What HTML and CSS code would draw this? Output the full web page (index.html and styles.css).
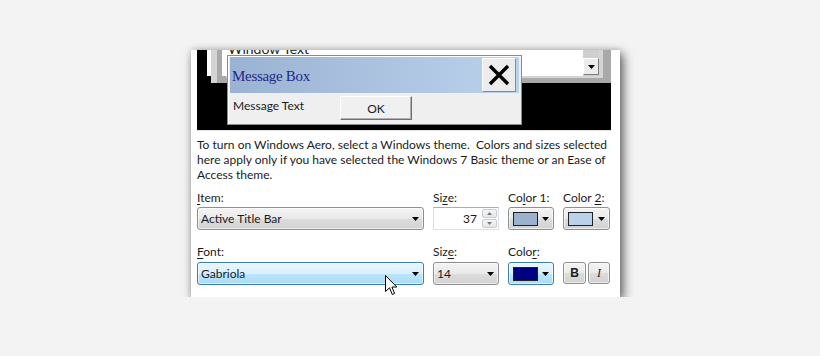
FILE: index.html
```html
<!DOCTYPE html>
<html>
<head>
<meta charset="utf-8">
<link rel="stylesheet" href="styles.css">
</head>
<body>
<div class="panel">
  <div class="preview">
    <div class="aw-back"></div>
    <div class="aw">
      <div class="client">
        <span class="wtext">Window Text</span>
        <div class="vscroll">
          <div class="sbtn"><svg width="7" height="4" viewBox="0 0 7 4"><path d="M0 0h7L3.5 4z" fill="#000"/></svg></div>
        </div>
      </div>
    </div>
    <div class="msgbox">
      <div class="mtitle">
        <span class="mtitle-text">Message Box</span>
        <div class="mclose"><svg width="22" height="22" viewBox="0 0 22 22"><path d="M2 2L20 20M20 2L2 20" stroke="#000" stroke-width="3.4"/></svg></div>
      </div>
      <div class="mbody">
        <span class="mtext">Message Text</span>
        <div class="okbtn">OK</div>
      </div>
    </div>
  </div>

  <p class="desc">To turn on Windows Aero, select a Windows theme.&nbsp; Colors and sizes selected<br>here apply only if you have selected the Windows 7 Basic theme or an Ease of<br>Access theme.</p>

  <div class="grid">
    <div class="lbl"><u>I</u>tem:</div>
    <div class="lbl">Si<u>z</u>e:</div>
    <div class="lbl">Co<u>l</u>or 1:</div>
    <div class="lbl">Color <u>2</u>:</div>

    <div class="ctl combo"><span>Active Title Bar</span><svg class="arr" width="7" height="4" viewBox="0 0 7 4"><path d="M0 0h7L3.5 4z" fill="#000"/></svg></div>
    <div class="ctl spin">
      <span class="spin-val">37</span>
      <div class="spin-btns">
        <div class="sb"><svg width="5" height="3" viewBox="0 0 5 3"><path d="M0 3h5L2.5 0z" fill="#6d7c8c"/></svg></div>
        <div class="sb"><svg width="5" height="3" viewBox="0 0 5 3"><path d="M0 0h5L2.5 3z" fill="#6d7c8c"/></svg></div>
      </div>
    </div>
    <div class="ctl cbtn"><span class="swatch sw1"></span><svg class="arr" width="7" height="4" viewBox="0 0 7 4"><path d="M0 0h7L3.5 4z" fill="#000"/></svg></div>
    <div class="ctl cbtn"><span class="swatch sw2"></span><svg class="arr" width="7" height="4" viewBox="0 0 7 4"><path d="M0 0h7L3.5 4z" fill="#000"/></svg></div>

    <div class="lbl r2"><u>F</u>ont:</div>
    <div class="lbl r2">Siz<u>e</u>:</div>
    <div class="lbl r2">Colo<u>r</u>:</div>
    <div class="lbl r2"></div>

    <div class="ctl combo hot r2c">
      <span>Gabriola</span><svg class="arr" width="7" height="4" viewBox="0 0 7 4"><path d="M0 0h7L3.5 4z" fill="#000"/></svg>
      <svg class="cursor" width="13" height="21" viewBox="0 0 13 21"><path d="M0.5 0.5V16.5L4.5 12.8L7.3 19.5L9.6 18.5L6.9 12H11.8Z" fill="#fff" stroke="#000" stroke-width="1" stroke-linejoin="round"/></svg>
    </div>
    <div class="ctl combo small r2c"><span>14</span><svg class="arr" width="7" height="4" viewBox="0 0 7 4"><path d="M0 0h7L3.5 4z" fill="#000"/></svg></div>
    <div class="ctl cbtn hot r2c"><span class="swatch sw3"></span><svg class="arr" width="7" height="4" viewBox="0 0 7 4"><path d="M0 0h7L3.5 4z" fill="#000"/></svg></div>
    <div class="bi r2c">
      <div class="tbtn bold">B</div>
      <div class="tbtn ital">I</div>
    </div>
  </div>
</div>
</body>
</html>
```
FILE: styles.css
```css
* { box-sizing: border-box; }

body {
  margin: 0;
  background: #f3f3f3;
  font-family: Lato, "Noto Sans", sans-serif;
  font-size: 12px;
  color: #1b1b1b;
}

.panel {
  margin: 50px 0 0 191px;
  width: 429px;
  height: 247px;
  background: #fff;
  padding: 0 9px 11px 6px;
  box-shadow: 3px 4px 10px rgba(0, 0, 0, 0.62), 0 -1px 6px rgba(0, 0, 0, 0.12);
}

/* ---------- preview ---------- */
.preview {
  position: relative;
  height: 80px;
  background: #000;
  overflow: hidden;
  box-shadow: 0 1px 0 #e2e2e2;
}

.aw-back {
  position: absolute;
  left: 10px;
  top: -30px;
  width: 392px;
  height: 56px;
  background: #fff;
}

.aw {
  position: absolute;
  left: 14px;
  top: -30px;
  width: 400px;
  height: 63px;
  background: #a9a9a9;
  box-shadow: inset 6px 0 0 #d4d4d4;
}

.client {
  position: absolute;
  left: 11px;
  top: 0;
  width: 377px;
  height: 56px;
  background: #fff;
  box-shadow: 4px 2px 0 #d4d4d4;
}

.wtext {
  position: absolute;
  left: 6px;
  top: 22px;
  font-size: 14px;
  line-height: 14px;
  color: #222;
}

.vscroll {
  position: absolute;
  right: 0;
  top: 0;
  width: 16px;
  height: 56px;
  background: #cfcfcf;
  display: flex;
  flex-direction: column;
  justify-content: flex-end;
  padding-bottom: 1px;
}

.sbtn {
  height: 17px;
  background: #ececec;
  border: 1px solid;
  border-color: #fff #7a7a7a #7a7a7a #fff;
  display: flex;
  align-items: center;
  justify-content: center;
}

.msgbox {
  position: absolute;
  left: 30px;
  top: 5px;
  width: 295px;
  height: 70px;
  background: #efefef;
  border: 1px solid #8a8a8a;
  padding: 1px 2px;
  box-shadow: inset 1px 1px 0 #fff;
}

.mtitle {
  height: 36px;
  background: linear-gradient(to right, #9bb3d3, #bad2eb);
  display: flex;
  align-items: center;
  justify-content: space-between;
  padding: 0 3px 0 2px;
}

.mtitle-text {
  font-family: "Liberation Serif", serif;
  font-size: 15px;
  letter-spacing: -0.3px;
  color: #1f2888;
  padding-top: 2px;
}

.mclose {
  width: 34px;
  height: 34px;
  background: #ececec;
  border: 1px solid;
  border-color: #fff #8a8a8a #8a8a8a #fff;
  display: flex;
  align-items: center;
  justify-content: center;
}

.mbody {
  height: 30px;
  display: flex;
  align-items: center;
  padding-left: 3px;
}

.mtext {
  width: 107px;
  margin-top: -5px;
  color: #1b1b1b;
}

.okbtn {
  width: 72px;
  height: 24px;
  background: #f0f0f0;
  border: 1px solid;
  border-color: #fff #6f6f6f #6f6f6f #fff;
  box-shadow: inset -1px -1px 0 #b0b0b0;
  display: flex;
  align-items: center;
  justify-content: center;
  padding-top: 1px;
}

/* ---------- description ---------- */
.desc {
  margin: 7px 0 0;
  line-height: 15px;
  white-space: nowrap;
}

/* ---------- controls ---------- */
.grid {
  display: grid;
  grid-template-columns: 227px 66px 46px 47px;
  column-gap: 9px;
  margin-top: 8px;
}

.lbl {
  height: 15px;
  line-height: 15px;
}

.lbl u { text-decoration-thickness: 1px; text-underline-offset: 2px; }

.lbl.r2 { margin-top: 14px; }

.ctl {
  height: 23px;
  margin-top: 2px;
  border-radius: 3px;
  display: flex;
  align-items: center;
}

.ctl.r2c, .bi.r2c { margin-top: 3px; }

.combo {
  position: relative;
  border: 1px solid #8e8f8f;
  background: linear-gradient(#f4f4f4, #e9e9e9 50%, #dcdcdc 51%, #d2d2d2);
  padding: 0 4px 0 3px;
  justify-content: space-between;
  box-shadow: inset 0 0 0 1px rgba(255, 255, 255, 0.6);
}

.combo.hot {
  border-color: #3c7fb1;
  background: linear-gradient(#eaf6fd, #d9f0fc 50%, #bee6fd 51%, #a9dbf6);
}

.cursor {
  position: absolute;
  left: 187px;
  top: 12px;
}

.spin {
  border: 1px solid #dcdfe3;
  border-top-color: #abadb3;
  border-radius: 0;
  background: #fff;
  padding: 1px 1px 1px 0;
  justify-content: flex-end;
}

.spin-val {
  margin-right: 5px;
}

.spin-btns {
  width: 15px;
  height: 100%;
  display: flex;
  flex-direction: column;
  gap: 1px;
}

.sb {
  flex: 1;
  border: 1px solid #c8cdd3;
  border-radius: 2px;
  background: linear-gradient(#f7f7f7, #e6e6e6);
  display: flex;
  align-items: center;
  justify-content: center;
}

.cbtn {
  border: 1px solid #8e8f8f;
  background: linear-gradient(#f4f4f4, #e9e9e9 50%, #dcdcdc 51%, #d2d2d2);
  padding: 0 4px 0 4px;
  justify-content: space-between;
  box-shadow: inset 0 0 0 1px rgba(255, 255, 255, 0.6);
}

.cbtn.hot {
  border-color: #3c7fb1;
  background: linear-gradient(#eaf6fd, #d9f0fc 50%, #bee6fd 51%, #a9dbf6);
}

.swatch {
  width: 25px;
  height: 14px;
  border: 1px solid #222;
}

.sw1 { background: #9ab2d0; }
.sw2 { background: #b9d1ea; }
.sw3 { background: #000080; }

.bi {
  height: 23px;
  display: flex;
  gap: 2px;
}

.tbtn {
  width: 23px;
  height: 22px;
  border: 1px solid #8e8f8f;
  border-radius: 3px;
  background: linear-gradient(#f4f4f4, #e9e9e9 50%, #dcdcdc 51%, #d2d2d2);
  display: flex;
  align-items: center;
  justify-content: center;
  box-shadow: inset 0 0 0 1px rgba(255, 255, 255, 0.6);
}

.tbtn.bold {
  font-family: "Liberation Sans", sans-serif;
  font-weight: bold;
  font-size: 12px;
}

.tbtn.ital {
  width: 22px;
  font-family: "Liberation Serif", serif;
  font-style: italic;
  font-size: 12px;
}
```
